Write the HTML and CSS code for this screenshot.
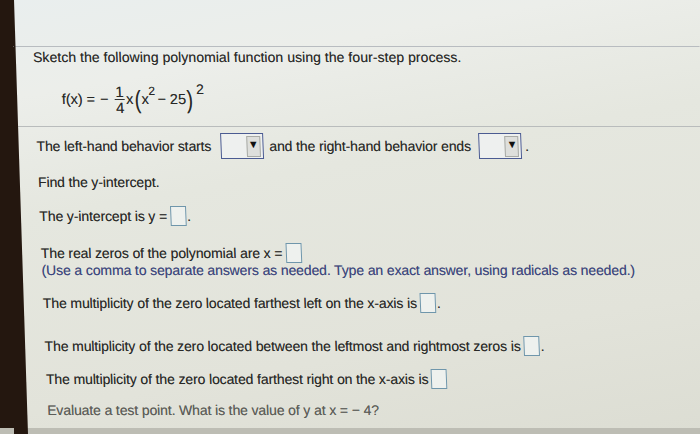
FILE: index.html
```html
<!DOCTYPE html>
<html>
<head>
<meta charset="utf-8">
<link rel="stylesheet" href="styles.css">
</head>
<body>
<div class="page">
  <div class="edge"></div>
  <div class="main">
    <div class="top"></div>
    <div class="question">
      <div class="title">Sketch the following polynomial function using the four-step process.</div>
      <div class="formula">
        <span class="fx">f(x) =</span>
        <span class="minus">−</span>
        <span class="frac"><span class="num">1</span><span class="den">4</span></span>
        <span class="var">x</span>
        <span class="paren">(</span>
        <span class="var">x</span><sup class="sq">2</sup>
        <span class="minus2">−</span>
        <span class="num25">25</span>
        <span class="paren">)</span>
        <sup class="sq2">2</sup>
      </div>
    </div>
    <div class="body">
      <div class="row r-behavior">
        <span>The left-hand behavior starts</span>
        <span class="select"><span class="btn">▼</span></span>
        <span>and the right-hand behavior ends</span>
        <span class="select last"><span class="btn">▼</span></span>
        <span class="dot">.</span>
      </div>
      <div class="row r-find">Find the y-intercept.</div>
      <div class="row r-yint">The y-intercept is y =<span class="box"></span><span class="dot">.</span></div>
      <div class="row r-zeros">The real zeros of the polynomial are x =<span class="box"></span></div>
      <div class="row note">(Use a comma to separate answers as needed. Type an exact answer, using radicals as needed.)</div>
      <div class="row r-m1">The multiplicity of the zero located farthest left on the x-axis is<span class="box"></span><span class="dot">.</span></div>
      <div class="row r-m2">The multiplicity of the zero located between the leftmost and rightmost zeros is<span class="box"></span><span class="dot">.</span></div>
      <div class="row r-m3">The multiplicity of the zero located farthest right on the x-axis is<span class="box"></span></div>
      <div class="row r-eval">Evaluate a test point. What is the value of y at x = − 4?</div>
    </div>
  </div>
  <div class="bottom"></div>
</div>
</body>
</html>
```

FILE: styles.css
```css
* { box-sizing: border-box; }
html, body { margin: 0; padding: 0; }
body {
  width: 700px;
  height: 434px;
  overflow: hidden;
  font-family: "Liberation Sans", Arial, sans-serif;
  font-size: 14px;
  color: #282826;
}
.page {
  position: relative;
  display: flex;
  width: 700px;
  height: 434px;
  overflow: hidden;
  background: linear-gradient(170deg, #e9eeee 0%, #eceeea 18%, #e5e7df 40%, #e2e3da 75%, #dcddd3 100%);
}
.edge {
  width: 14px;
  flex: none;
  background: #24170f;
  position: relative;
}
.edge::after {
  content: "";
  position: absolute;
  left: 14px;
  top: 0;
  width: 14px;
  height: 434px;
  background: #24170f;
  clip-path: polygon(0 0, 0 0, 100% 100%, 0 100%);
  z-index: 2;
}
.bottom {
  position: absolute;
  left: 0;
  right: 0;
  bottom: 0;
  height: 6px;
  background: #bdbdb4;
  z-index: 1;
}
.main {
  flex: 1;
  display: flex;
  flex-direction: column;
  transform: skewX(2.3deg);
  transform-origin: 0 57px;
  letter-spacing: -0.12px;
  text-shadow: 0 0 0.6px rgba(40, 40, 38, 0.45);
}
.top {
  height: 47px;
  border-bottom: 1px solid #b8bcc0;
  flex: none;
}
.question {
  height: 80px;
  flex: none;
  border-bottom: 1px solid #b9bcbc;
  padding-left: 19px;
}
.title {
  line-height: 18px;
  margin-top: 1px;
  letter-spacing: 0.05px;
}
.formula {
  display: flex;
  align-items: center;
  margin-top: 17px;
  margin-left: 27px;
  font-size: 14.5px;
  height: 32px;
  letter-spacing: 0;
}
.fx { margin-right: 5px; }
.minus { margin-right: 6px; }
.frac {
  display: inline-flex;
  flex-direction: column;
  align-items: center;
  line-height: 13px;
  font-size: 15px;
  margin-right: 1px;
}
.num { border-bottom: 1px solid #333; padding: 0 1px 1px; }
.den { padding-top: 1px; }
.paren {
  font-size: 25px;
  line-height: 25px;
  margin: 0;
  transform: scaleX(0.75);
}
.sq { font-size: 12px; align-self: flex-start; margin-top: 1px; margin-right: 2px; margin-left: 0; }
.minus2 { margin-right: 4px; }
.num25 { margin-right: 0; }
.sq2 { font-size: 14px; align-self: flex-start; margin-top: -2px; margin-left: 2px; }
.body {
  padding-left: 19px;
}
.row {
  display: flex;
  align-items: center;
  height: 20px;
  white-space: nowrap;
}
.r-behavior { margin-top: 6px; height: 26px; }
.r-find { margin-top: 13px; }
.r-yint { margin-top: 14px; }
.r-zeros { margin-top: 17px; }
.note { margin-top: -2px; color: #3b4683; height: 18px; }
.r-m1 { margin-top: 14px; }
.r-m2 { margin-top: 23px; }
.r-m3 { margin-top: 13px; }
.r-eval { margin-top: 11px; color: #5c5d58; }
.select {
  display: inline-flex;
  justify-content: flex-end;
  align-items: stretch;
  width: 43px;
  height: 26px;
  border: 1px solid #4b5b92;
  background: #eef0ef;
  margin: 0 6px 0 9px;
  padding: 2px 2px 1px 0;
  text-shadow: none;
}
.select.last { margin-right: 2px; margin-left: 8px; }
.select .btn {
  width: 14px;
  background: #dedfdc;
  border: 1px solid #a8aaa6;
  color: #111;
  font-size: 11px;
  line-height: 14px;
  text-align: center;
}
.dot { margin-left: 1px; }
.box {
  display: inline-block;
  width: 16px;
  height: 20px;
  border: 1px solid #6f96ab;
  background: #eef1ee;
  margin-left: 3px;
}
```
